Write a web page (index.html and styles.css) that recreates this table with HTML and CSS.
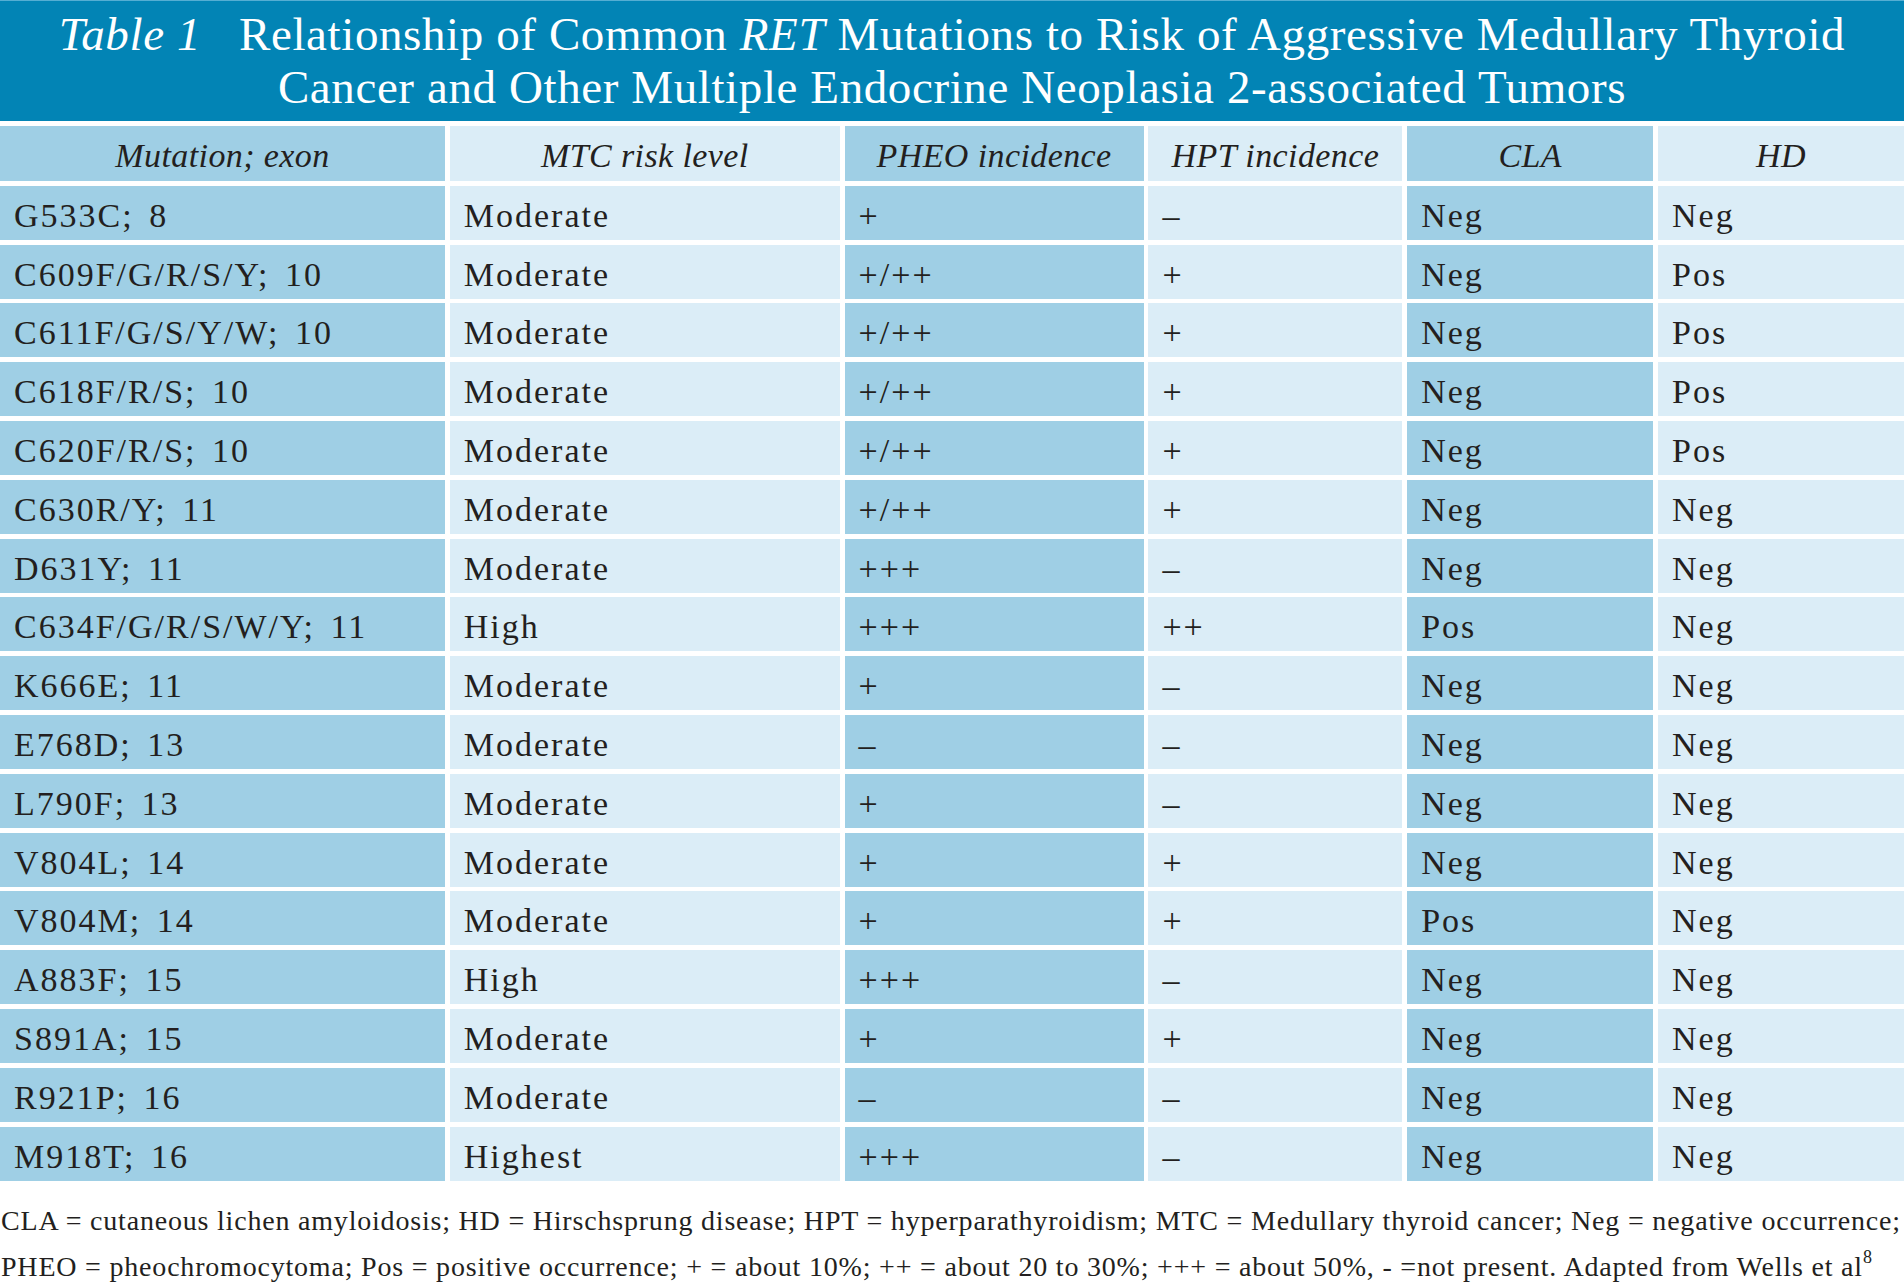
FILE: index.html
```html
<!DOCTYPE html>
<html lang="en">
<head>
<meta charset="utf-8">
<title>Table 1</title>
<link rel="stylesheet" href="styles.css">
</head>
<body>
<div class="page">
  <header class="title-bar">
    <div class="title-line"><span class="table-label">Table 1</span>Relationship of Common <i>RET</i> Mutations to Risk of Aggressive Medullary Thyroid</div>
    <div class="title-line">Cancer and Other Multiple Endocrine Neoplasia 2-associated Tumors</div>
  </header>

  <div class="grid">
    <div class="cell head dark">Mutation; exon</div>
    <div class="cell head light">MTC risk level</div>
    <div class="cell head dark">PHEO incidence</div>
    <div class="cell head light">HPT incidence</div>
    <div class="cell head dark">CLA</div>
    <div class="cell head light">HD</div>

    <div class="cell dark">G533C; 8</div><div class="cell light">Moderate</div><div class="cell dark">+</div><div class="cell light">–</div><div class="cell dark">Neg</div><div class="cell light">Neg</div>
    <div class="cell dark">C609F/G/R/S/Y; 10</div><div class="cell light">Moderate</div><div class="cell dark">+/++</div><div class="cell light">+</div><div class="cell dark">Neg</div><div class="cell light">Pos</div>
    <div class="cell dark">C611F/G/S/Y/W; 10</div><div class="cell light">Moderate</div><div class="cell dark">+/++</div><div class="cell light">+</div><div class="cell dark">Neg</div><div class="cell light">Pos</div>
    <div class="cell dark">C618F/R/S; 10</div><div class="cell light">Moderate</div><div class="cell dark">+/++</div><div class="cell light">+</div><div class="cell dark">Neg</div><div class="cell light">Pos</div>
    <div class="cell dark">C620F/R/S; 10</div><div class="cell light">Moderate</div><div class="cell dark">+/++</div><div class="cell light">+</div><div class="cell dark">Neg</div><div class="cell light">Pos</div>
    <div class="cell dark">C630R/Y; 11</div><div class="cell light">Moderate</div><div class="cell dark">+/++</div><div class="cell light">+</div><div class="cell dark">Neg</div><div class="cell light">Neg</div>
    <div class="cell dark">D631Y; 11</div><div class="cell light">Moderate</div><div class="cell dark">+++</div><div class="cell light">–</div><div class="cell dark">Neg</div><div class="cell light">Neg</div>
    <div class="cell dark">C634F/G/R/S/W/Y; 11</div><div class="cell light">High</div><div class="cell dark">+++</div><div class="cell light">++</div><div class="cell dark">Pos</div><div class="cell light">Neg</div>
    <div class="cell dark">K666E; 11</div><div class="cell light">Moderate</div><div class="cell dark">+</div><div class="cell light">–</div><div class="cell dark">Neg</div><div class="cell light">Neg</div>
    <div class="cell dark">E768D; 13</div><div class="cell light">Moderate</div><div class="cell dark">–</div><div class="cell light">–</div><div class="cell dark">Neg</div><div class="cell light">Neg</div>
    <div class="cell dark">L790F; 13</div><div class="cell light">Moderate</div><div class="cell dark">+</div><div class="cell light">–</div><div class="cell dark">Neg</div><div class="cell light">Neg</div>
    <div class="cell dark">V804L; 14</div><div class="cell light">Moderate</div><div class="cell dark">+</div><div class="cell light">+</div><div class="cell dark">Neg</div><div class="cell light">Neg</div>
    <div class="cell dark">V804M; 14</div><div class="cell light">Moderate</div><div class="cell dark">+</div><div class="cell light">+</div><div class="cell dark">Pos</div><div class="cell light">Neg</div>
    <div class="cell dark">A883F; 15</div><div class="cell light">High</div><div class="cell dark">+++</div><div class="cell light">–</div><div class="cell dark">Neg</div><div class="cell light">Neg</div>
    <div class="cell dark">S891A; 15</div><div class="cell light">Moderate</div><div class="cell dark">+</div><div class="cell light">+</div><div class="cell dark">Neg</div><div class="cell light">Neg</div>
    <div class="cell dark">R921P; 16</div><div class="cell light">Moderate</div><div class="cell dark">–</div><div class="cell light">–</div><div class="cell dark">Neg</div><div class="cell light">Neg</div>
    <div class="cell dark">M918T; 16</div><div class="cell light">Highest</div><div class="cell dark">+++</div><div class="cell light">–</div><div class="cell dark">Neg</div><div class="cell light">Neg</div>
  </div>

  <footer class="notes">
    <div class="note-line">CLA = cutaneous lichen amyloidosis; HD = Hirschsprung disease; HPT = hyperparathyroidism; MTC = Medullary thyroid cancer; Neg = negative occurrence;</div>
    <div class="note-line">PHEO = pheochromocytoma; Pos = positive occurrence; + = about 10%; ++ = about 20 to 30%; +++ = about 50%, - =not present. Adapted from Wells et al<sup>8</sup></div>
  </footer>
</div>
</body>
</html>
```

FILE: styles.css
```css
html, body {
  margin: 0;
  padding: 0;
  background: #ffffff;
}

.page {
  width: 1904px;
  font-family: "Liberation Serif", "Times New Roman", serif;
  color: #231f20;
}

.title-bar {
  background: #0284b5;
  color: #ffffff;
  height: 121px;
  box-sizing: border-box;
  padding-top: 7px;
  border-top: 1px solid #55aed3;
  text-align: center;
  font-size: 47px;
  line-height: 53px;
  letter-spacing: 0.6px;
  white-space: nowrap;
}

.table-label {
  font-style: italic;
  margin-right: 38px;
}

.grid {
  margin-top: 5px;
  display: grid;
  grid-template-columns: 445px 390px 299px 254px 246px 246px;
  grid-template-rows: 55px repeat(17, 54px);
  column-gap: 4.8px;
  row-gap: 4.8px;
}

.cell {
  font-size: 34px;
  line-height: 54px;
  letter-spacing: 2px;
  word-spacing: 5px;
  padding: 3px 0 0 14px;
  box-sizing: border-box;
  white-space: nowrap;
  overflow: hidden;
}

.cell.head {
  font-style: italic;
  text-align: center;
  padding-left: 0;
  letter-spacing: 0.4px;
  word-spacing: 0;
}

.dark {
  background: #9fcfe5;
}

.light {
  background: #dbedf7;
}

.notes {
  margin-top: 17px;
  font-size: 28px;
  line-height: 46px;
  letter-spacing: 0.8px;
  padding-left: 1px;
  white-space: nowrap;
}

.note-line sup {
  font-size: 18px;
  line-height: 0;
  vertical-align: 13px;
  letter-spacing: 0;
}
```
